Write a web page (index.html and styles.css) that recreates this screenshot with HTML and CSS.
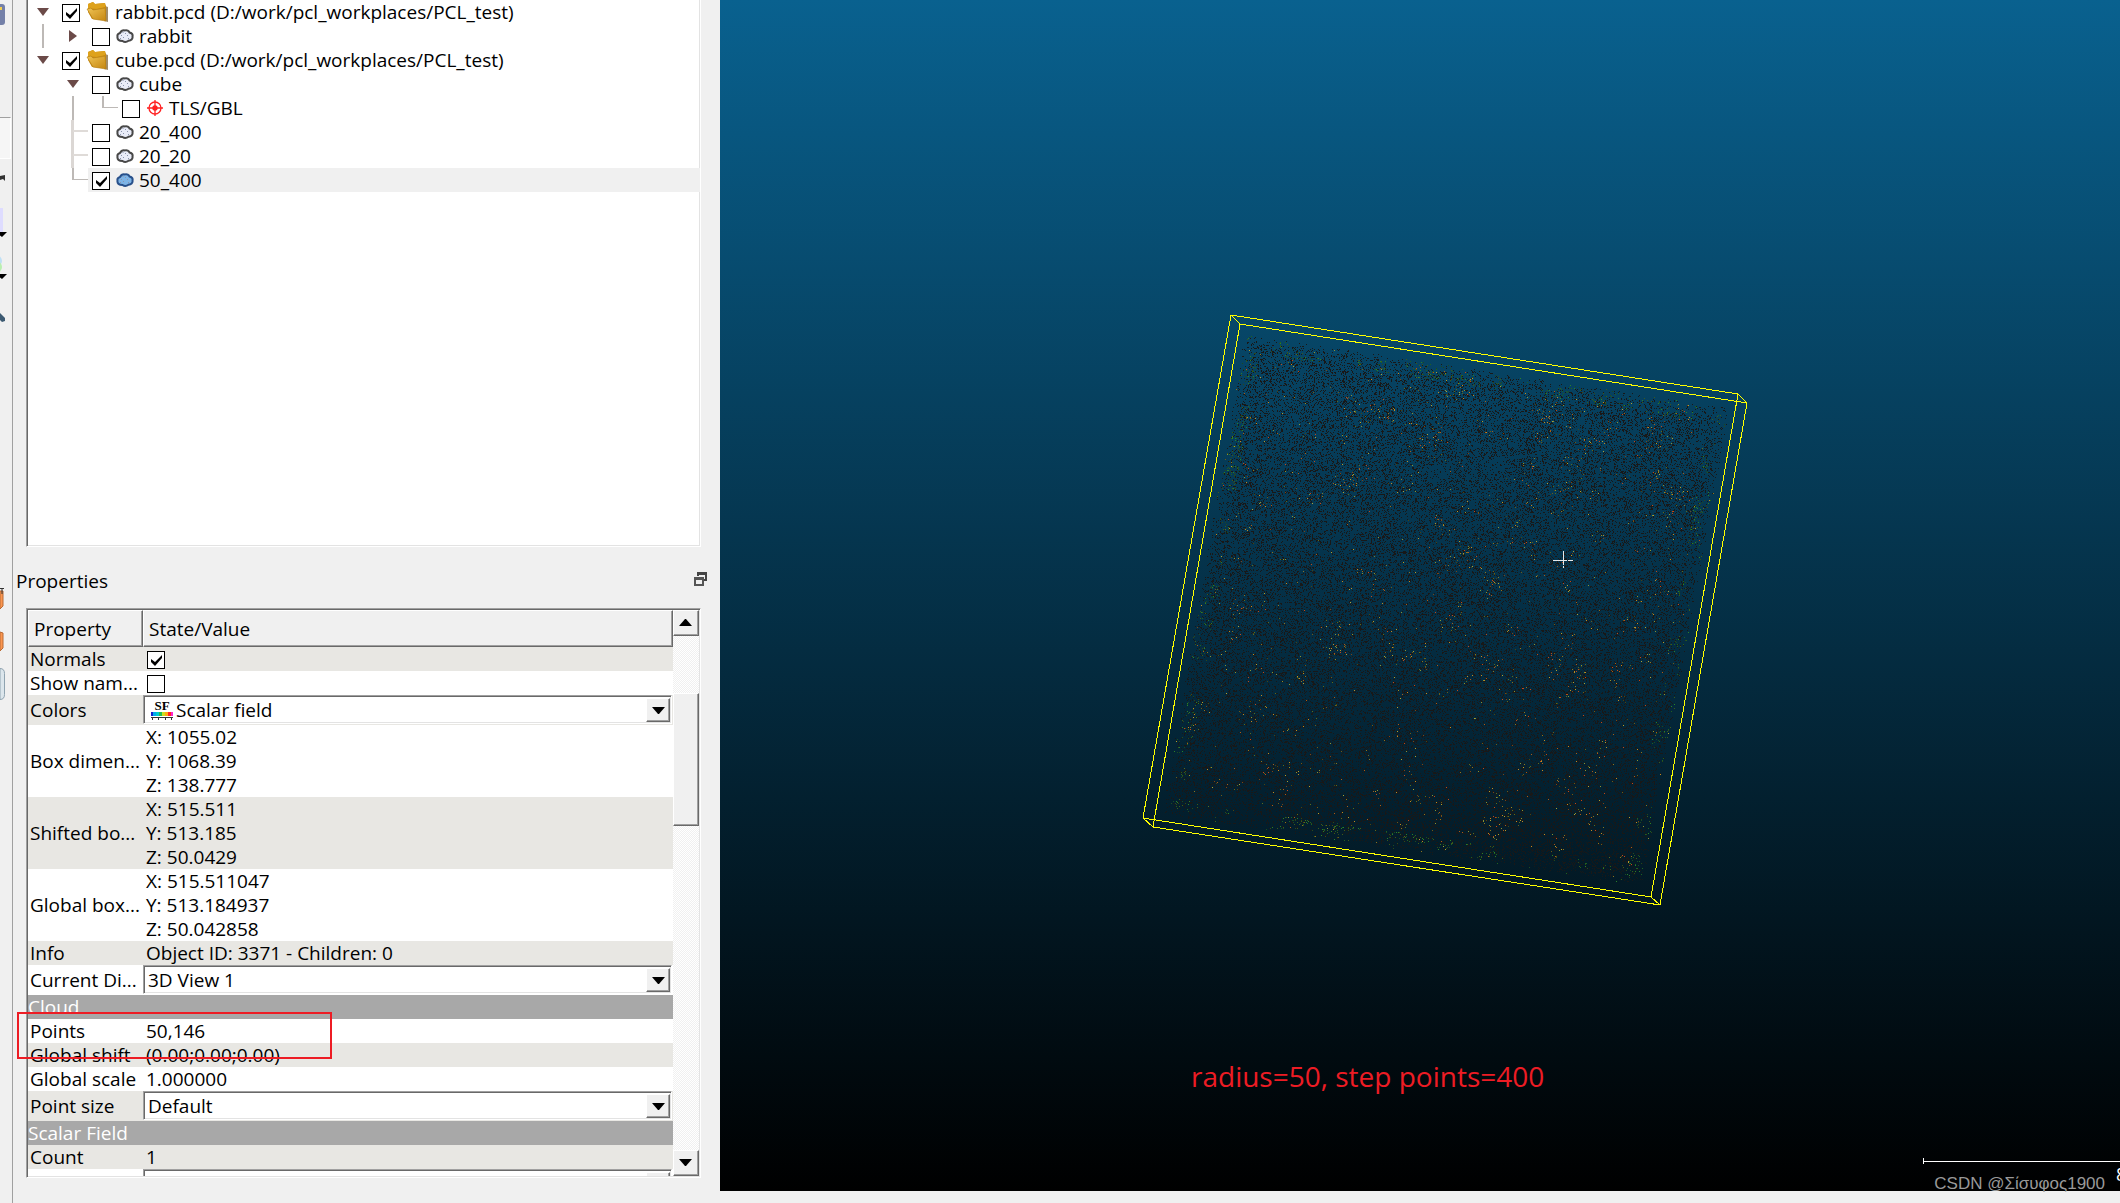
FILE: index.html
```html
<!DOCTYPE html>
<html lang="en">
<head>
<meta charset="utf-8">
<title>CloudCompare</title>
<link rel="stylesheet" href="styles.css">
</head>
<body>
<svg class="defs" width="0" height="0" aria-hidden="true">
  <defs>
    <linearGradient id="gold" x1="0" y1="0" x2="1" y2="1"><stop offset="0" stop-color="#f0c455"/><stop offset="1" stop-color="#c4850f"/></linearGradient>
    <symbol id="folder" viewBox="0 0 24 24">
      <path d="M19 6l3 1v15l-4-1z" fill="#a08c6a"/>
      <path d="M2 4l5-2 2 2 10-1 1 3v14l-14-1L2 12z" fill="#c88a10"/>
      <path d="M2 4l5-2 2 2 10-1v4l-8 2L2 8z" fill="#dea21c"/>
      <path d="M1 9l4-1 2 2c5-1 9-1 12-2l1 13-13-2z" fill="url(#gold)" stroke="#b57d12" stroke-width=".6"/>
    </symbol>
    <symbol id="cloud" viewBox="0 0 18 16">
      <path d="M1.500 8.500C1 6.500 2.500 5.500 4 5c1-2 3-3 5-2.600C11 1.800 13 3 13.500 4.500c2 .5 3.500 2 3 4 .5 2.500-1.500 4-4 4.300-2 1.500-4.500 1.300-6 .2C3 13 1 11.500 1.500 8.500z"/>
      <path d="M5 7l1 1M9 5l1 1M8 9l-1 1M12 7l-1 1M4 10l1 1M13 10l-1 1M7 4v1" fill="none" stroke="#8b95ae" stroke-width="1"/>
    </symbol>
    <symbol id="open" viewBox="0 0 30 24"><path d="M9 8h12l-6 8z" fill="#6b4a48"/></symbol>
    <symbol id="closed" viewBox="0 0 30 24"><path d="M11 6v12l8-6z" fill="#6b4a48"/></symbol>
    <symbol id="down" viewBox="0 0 13 7"><path d="M0 0h13L7 7H6z"/></symbol>
  </defs>
</svg>

<div class="app">
  <aside class="toolbar" aria-label="Tools">
    <svg width="12" height="720" viewBox="0 0 12 720">
      <path d="M0 4h2q3 0 3 3v15q0 3-3 3H0z" fill="#7480a8"/><path d="M0 7h2v3H0z" fill="#f4cf50"/>
      <path d="M0 117.500h10.500" stroke="#a0a0a0"/><path d="M0 118h10v40H0z" fill="#f6f6f6"/><path d="M10.500 118v40" stroke="#fff"/><path d="M0 158.500h11" stroke="#fff"/>
      <path d="M0 176l5-1v6l-2-2-3 1z" fill="#333"/>
      <path d="M0 208h3v24H0z" fill="#dedcff"/><path d="M-5 232H7l-5 5z"/>
      <circle cx="-4" cy="261" r="6" fill="#bfe0f5"/><circle cx="-4" cy="267" r="6" fill="#b9efb0"/><path d="M-5 274H7l-5 5z"/>
      <path d="M0 313l5 5v3l-3 1-2-2z" fill="#3d5a72"/>
      <path d="M0 591h3v15l-3 3z" fill="#fb9650" stroke="#b96a35"/><path d="M0 588.500h4M2 588v6" stroke="#333"/>
      <path d="M0 632l3 1v15l-3 3z" fill="#fb9650" stroke="#b96a35"/>
      <path d="M0 668.500q4.500 0 4.500 5v21q0 5-4.500 5z" fill="#dce6ec" stroke="#8fa3b0"/>
    </svg>
  </aside>

  <section class="dock">
    <div class="sunken tree" role="tree" aria-label="DB Tree">
      <div class="row"><svg class="cell"><use href="#open"/></svg><label class="item"><input type="checkbox" checked><svg class="folder"><use href="#folder"/></svg>rabbit.pcd (D:/work/pcl_workplaces/PCL_test)</label></div>
      <div class="row"><span class="cell through"></span><svg class="cell"><use href="#closed"/></svg><label class="item"><input type="checkbox"><svg class="cloud"><use href="#cloud"/></svg>rabbit</label></div>
      <div class="row"><svg class="cell"><use href="#open"/></svg><label class="item"><input type="checkbox" checked><svg class="folder"><use href="#folder"/></svg>cube.pcd (D:/work/pcl_workplaces/PCL_test)</label></div>
      <div class="row"><span class="cell"></span><svg class="cell"><use href="#open"/></svg><label class="item"><input type="checkbox"><svg class="cloud"><use href="#cloud"/></svg>cube</label></div>
      <div class="row"><span class="cell"></span><span class="cell through"></span><span class="cell last"></span><label class="item"><input type="checkbox"><svg class="target" viewBox="0 0 18 18"><g fill="none" stroke="#f22"><circle cx="9" cy="9" r="6" stroke-width="1.300"/><path d="M9 1v16M1 9h16" stroke-width="1.300"/></g><circle cx="9" cy="9" r="2.700" fill="#f22"/></svg>TLS/GBL</label></div>
      <div class="row"><span class="cell"></span><span class="cell tee"></span><label class="item"><input type="checkbox"><svg class="cloud"><use href="#cloud"/></svg>20_400</label></div>
      <div class="row"><span class="cell"></span><span class="cell tee"></span><label class="item"><input type="checkbox"><svg class="cloud"><use href="#cloud"/></svg>20_20</label></div>
      <div class="row"><span class="cell"></span><span class="cell last"></span><label class="item selected"><input type="checkbox" checked><svg class="cloud blue"><use href="#cloud"/></svg>50_400</label></div>
    </div>

    <header class="title">
      <h2>Properties</h2>
      <button class="float" aria-label="Float panel"><svg width="13" height="14" viewBox="0 0 13 14"><path d="M3 0h10v9h-3V7h1V3H5v1H3z" fill="#444"/><path d="M0 5h10v9H0zM2 8v4h6V8z" fill="#555" fill-rule="evenodd"/></svg></button>
    </header>

    <div class="sunken props">
      <div class="scroll">
        <table>
          <colgroup><col class="c1"><col></colgroup>
          <thead><tr><th>Property</th><th>State/Value</th></tr></thead>
          <tbody>
            <tr class="alt"><td><label for="normals">Normals</label></td><td><input type="checkbox" id="normals" checked></td></tr>
            <tr><td><label for="showname">Show nam...</label></td><td><input type="checkbox" id="showname"></td></tr>
            <tr class="alt combo"><td><label for="colors">Colors</label></td><td><div class="select icon"><svg class="sf" viewBox="0 0 24 20"><text x="12" y="10">SF</text><g><path d="M1 12h4v4H1z" fill="#12c"/><path d="M3 12h3v4H3z" fill="#0ae"/><path d="M6 12h3v4H6z" fill="#0cc"/><path d="M9 12h3v4H9z" fill="#2b5"/><path d="M12 12h3v4h-3z" fill="#cd2"/><path d="M15 12h3v4h-3z" fill="#fa1"/><path d="M18 12h3v4h-3z" fill="#f22"/><path d="M21 12h2v4h-2z" fill="#f2c"/></g><path d="M1 17.500h22M2.500 17v3M8.500 17v3M15.500 17v3M21.500 17v3" stroke="#333"/></svg><select id="colors"><option>Scalar field</option></select><span class="drop"><svg><use href="#down"/></svg></span></div></td></tr>
            <tr><td>Box dimen...</td><td>X: 1055.02<br>Y: 1068.39<br>Z: 138.777</td></tr>
            <tr class="alt"><td>Shifted bo...</td><td>X: 515.511<br>Y: 513.185<br>Z: 50.0429</td></tr>
            <tr><td>Global box...</td><td>X: 515.511047<br>Y: 513.184937<br>Z: 50.042858</td></tr>
            <tr class="alt"><td>Info</td><td>Object ID: 3371 - Children: 0</td></tr>
            <tr class="combo"><td><label for="display">Current Di...</label></td><td><div class="select"><select id="display"><option>3D View 1</option></select><span class="drop"><svg><use href="#down"/></svg></span></div></td></tr>
            <tr class="group"><td colspan="2">Cloud</td></tr>
            <tr><td>Points</td><td>50,146</td></tr>
            <tr class="alt"><td>Global shift</td><td>(0.00;0.00;0.00)</td></tr>
            <tr><td>Global scale</td><td>1.000000</td></tr>
            <tr class="alt combo"><td><label for="size">Point size</label></td><td><div class="select"><select id="size"><option>Default</option></select><span class="drop"><svg><use href="#down"/></svg></span></div></td></tr>
            <tr class="group"><td colspan="2">Scalar Field</td></tr>
            <tr class="alt"><td>Count</td><td>1</td></tr>
            <tr class="combo"><td></td><td><div class="select"><select aria-label="Active"><option></option></select><span class="drop"><svg><use href="#down"/></svg></span></div></td></tr>
          </tbody>
        </table>
      </div>
      <div class="scrollbar">
        <button aria-label="Scroll up"><svg class="up"><use href="#down"/></svg></button>
        <div class="thumb"></div>
        <button aria-label="Scroll down"><svg><use href="#down"/></svg></button>
      </div>
    </div>
    <div class="mark"></div>
  </section>

  <main class="view">
    <div class="scene">
      <canvas id="points" width="612" height="596"></canvas>
      <svg width="612" height="596" viewBox="0 0 612 596" fill="none" stroke="#ff0" shape-rendering="crispEdges">
        <path d="M91 3L598 82L511 585L3 506z"/>
        <path d="M100 12L607 91L520 593L13 515z"/>
        <path d="M91 3L100 12M598 82L607 91M511 585L520 593M3 506L13 515"/>
        <path d="M413 248.500h14M428 248.500h5M423.500 239v14M423.500 254v2" stroke="#e4e8ea"/>
      </svg>
    </div>
    <p class="caption">radius=50, step points=400</p>
    <div class="scale"><span>8</span></div>
    <p class="watermark">CSDN @Σίσυφος1900</p>
  </main>
</div>
<script src="points.js"></script>
</body>
</html>
```
FILE: styles.css
```css
* { box-sizing: border-box; }
body {
  margin: 0;
  background: #f0f0f0;
  color: #000;
  font: 19px/24px "Open Sans", "Noto Sans", sans-serif;
  overflow: hidden;
}
.defs { position: absolute; }
.app { display: grid; grid-template-columns: 13px 707px 1fr; height: 100vh; }
.toolbar { border-right: 1px solid #a0a0a0; overflow: hidden; }
.toolbar svg { display: block; }

.dock {
  position: relative;
  display: grid;
  grid-template-rows: 547fr 61px 570fr;
  padding: 0 19px 25px 13px;
  min-height: 0;
}
.sunken {
  border: 1px solid #fff;
  border-top-color: #a0a0a0;
  border-left-color: #a0a0a0;
  box-shadow: inset 1px 1px #696969, inset -1px -1px #e3e3e3;
  padding: 1px;
  background: #fff;
  min-height: 0;
  overflow: hidden;
}
.tree { border-top: 0; padding: 0 0 1px 1px; box-shadow: inset 1px 0 #696969, inset -1px -1px #e3e3e3; }

input[type="checkbox"] {
  appearance: none;
  flex: none;
  display: block;
  width: 18px;
  height: 18px;
  margin: 0;
  border: 1px solid #000;
  background: #fff;
}
input[type="checkbox"]:checked::before {
  content: "";
  display: block;
  width: 16px;
  height: 16px;
  background: #000;
  clip-path: polygon(3px 7px, 7px 10px, 14px 3px, 14px 6px, 7px 14px, 3px 10px);
}

.row { display: flex; height: 24px; }
.cell { flex: none; width: 30px; height: 24px; position: relative; }
.cell::before, .cell::after { position: absolute; background: #bdb9b6; }
.through::before, .last::before { content: ""; left: 14px; top: 0; width: 2px; height: 24px; }
.last::before { height: 12px; }
.last::after { content: ""; left: 14px; top: 11px; width: 16px; height: 1px; }
.tee::before { content: ""; left: 13px; top: 0; width: 3px; height: 24px; background: #dbd7d4; }
.tee::after { content: ""; left: 15px; top: 10px; width: 15px; height: 2px; background: #dfdbd8; }
.item { flex: 1; display: flex; align-items: center; padding-left: 4px; white-space: nowrap; }
.item.selected { background: #f0f0f0; }
.item input { margin: 2px 6px 0 0; }
.item svg { flex: none; margin-right: 5px; }
.folder { width: 24px; height: 24px; }
.cloud { width: 18px; height: 16px; fill: #e9ecf8; stroke: #484848; stroke-width: 2; }
.blue { fill: #7db4e6; stroke: #28508a; }
.target { width: 18px; height: 18px; }

.title { display: flex; justify-content: space-between; padding: 22px 0 0; margin-left: -10px; margin-right: -6px; }
.title h2 { margin: 0; font-size: 19px; font-weight: 400; line-height: 24px; }
.float { border: 0; padding: 0; background: none; width: 13px; height: 20px; }
.float svg { display: block; }

.props { display: flex; padding: 1px; }
.scroll { flex: 1; min-width: 0; overflow: hidden; }
table { width: 100%; table-layout: fixed; border-collapse: separate; border-spacing: 0; }
.c1 { width: 115px; }
th, td { padding: 0; text-align: left; vertical-align: middle; font-weight: 400; white-space: nowrap; }
th, .thumb, .scrollbar button, .drop {
  background: #f0f0f0;
  border: 1px solid #fff;
  border-right-color: #696969;
  border-bottom-color: #696969;
  box-shadow: inset -1px -1px #a0a0a0;
}
th { height: 37px; padding-left: 5px; }
td { height: 24px; padding-left: 3px; }
td:first-child { padding-left: 2px; }
.alt td { background: #e8e7e3; }
.combo td { height: 30px; }
.combo td:last-child { padding: 0; }
.group td, .group td:first-child { background: #a8a8a8; color: #fff; padding-left: 0; }
td input[type="checkbox"] { margin: 2px 0 0 1px; }

.select {
  position: relative;
  height: 29px;
  margin: 0 1px 1px 0;
  background: #fff;
  border: 1px solid #fff;
  border-top-color: #a0a0a0;
  border-left-color: #a0a0a0;
  box-shadow: inset 1px 1px #696969, inset -1px -1px #e3e3e3;
}
.select select {
  appearance: none;
  display: block;
  width: 100%;
  height: 27px;
  padding: 0 30px 0 4px;
  border: 0;
  background: none;
  color: #000;
  font: inherit;
}
.select.icon select { padding-left: 32px; }
.sf { position: absolute; left: 6px; top: 3px; width: 24px; height: 22px; }
.sf text { font: 700 13px "Liberation Serif", serif; text-anchor: middle; }
.drop {
  position: absolute;
  right: 1px;
  top: 2px;
  width: 24px;
  height: 24px;
  display: grid;
  place-items: center;
  pointer-events: none;
}
.drop svg, .scrollbar svg { width: 13px; height: 7px; display: block; }
.scrollbar {
  width: 26px;
  display: grid;
  grid-template-rows: 26px 57fr 133fr 324fr 26px;
  background: repeating-conic-gradient(#fff 0 25%, #f0f0f0 0 50%) 0 0 / 2px 2px;
}
.scrollbar button { padding: 0 1px 1px 0; display: grid; place-items: center; }
.scrollbar .up { transform: rotate(180deg); }
.scrollbar .thumb { grid-row: 3; }
.scrollbar button:last-child { grid-row: 5; }

.mark { position: absolute; left: 4px; bottom: 144px; width: 315px; height: 47px; border: 2px solid #ed1c24; }

.view {
  position: relative;
  margin-bottom: 12px;
  background: linear-gradient(#09618f, #000);
}
.scene { position: absolute; left: calc(50% - 280px); top: 312px; width: 612px; height: 596px; }
.scene canvas, .scene svg { position: absolute; left: 0; top: 0; }
.caption { position: absolute; left: 471px; bottom: 97px; margin: 0; color: #ed1c24; font-size: 28px; line-height: 36px; }
.scale { position: absolute; right: 0; bottom: 27px; width: 197px; height: 6px; border-left: 1px solid #fff; }
.scale::before { content: ""; display: block; margin-top: 3px; height: 1px; background: #fff; }
.scale span { position: absolute; left: 192px; top: 4px; width: 5px; overflow: hidden; color: #fff; font-size: 18px; line-height: 24px; }
.watermark { position: absolute; right: 15px; bottom: -5px; margin: 0; color: #999; font: 17px/24px "Liberation Sans", sans-serif; }
```
FILE: points.js
```js
// Scatter the point cloud over the face of the bounding box.
(function () {
  var ctx = document.getElementById("points").getContext("2d");
  var seed = 50146;
  function rnd() {
    seed = (seed * 1664525 + 1013904223) >>> 0;
    return seed / 4294967296;
  }
  var N = 40, grid = [];
  for (var i = 0; i < N * N; i++) grid.push(rnd());
  function noise(u, v) {
    var x = u * (N - 2), y = v * (N - 2), a = Math.floor(x), b = Math.floor(y);
    var fx = x - a, fy = y - b;
    var p = grid[b * N + a], q = grid[b * N + a + 1], r = grid[(b + 1) * N + a], s = grid[(b + 1) * N + a + 1];
    return (p * (1 - fx) + q * fx) * (1 - fy) + (r * (1 - fx) + s * fx) * fy;
  }
  function place(u, v) {
    return [
      Math.round((105 + 484 * u) * (1 - v) + (22 + 480 * u) * v),
      Math.round((22 + 74 * u) * (1 - v) + (502 + 71 * u) * v)
    ];
  }
  var warm = ["#4a4410", "#6b5a18", "#8a7420", "#a85c18", "#7a4416", "#8a9030", "#5c6a1c", "#c08a20", "#b0a030", "#c04818"];
  var green = ["#1d4a20", "#22601f", "#2a8028", "#304818", "#3d5a1a"];
  for (i = 0; i < 80000; i++) {
    var u = rnd(), v = rnd();
    var d = Math.min(u, v, 1 - u, 1 - v);
    var n = noise(u, v), keep = rnd();
    if (d < 0.025 && keep > 0.2 + d * 24) continue;
    if (keep > 0.5 + n * 0.6) continue;
    var p = place(u, v), c = rnd();
    ctx.fillStyle = "#181818";
    if (n > 0.7 && c < 0.12) ctx.fillStyle = warm[Math.floor(rnd() * warm.length)];
    else if (c < 0.012) ctx.fillStyle = warm[Math.floor(rnd() * warm.length)];
    else if (d < 0.035 && n > 0.5 && c < 0.4) ctx.fillStyle = green[Math.floor(rnd() * green.length)];
    ctx.fillRect(p[0], p[1], 1, 1);
  }
})();
```
